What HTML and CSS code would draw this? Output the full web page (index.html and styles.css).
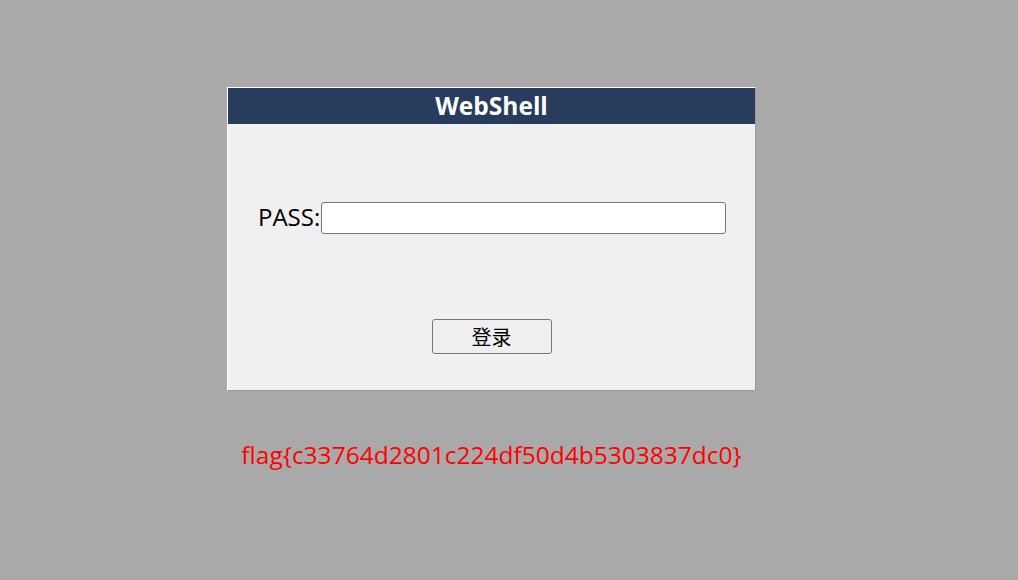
FILE: index.html
```html
<!DOCTYPE html>
<html>
<head>
<meta charset="utf-8">
<link rel="stylesheet" href="styles.css">
</head>
<body>
<div class="wrap">
  <div class="box">
    <div class="head">WebShell</div>
    <div class="row">
      <label class="lbl">PASS:</label><input class="pass" type="password">
    </div>
    <div class="btnrow"><button class="btn">登录</button></div>
  </div>
  <div class="flag">flag{c33764d2801c224df50d4b5303837dc0}</div>
</div>
</body>
</html>
```
FILE: styles.css
```css
html, body {
  margin: 0;
  padding: 0;
  background: #a9a9a9;
  font-family: "Open Sans", "Noto Sans", "Noto Sans CJK SC", sans-serif;
}
.wrap {
  width: 529px;
  margin: 87px 0 0 227px;
}
.box {
  box-sizing: border-box;
  width: 529px;
  height: 304px;
  background: #f0f0f0;
  border: 1px solid;
  border-color: #ffffff #9a9a9a #9a9a9a #ffffff;
  display: flex;
  flex-direction: column;
}
.head {
  height: 36px;
  background: #283c5e;
  color: #fff;
  font-weight: bold;
  font-size: 24.5px;
  line-height: 36px;
  text-align: center;
}
.row {
  display: flex;
  align-items: center;
  margin-top: 78px;
  padding-left: 30px;
  height: 32px;
}
.lbl {
  font-size: 24px;
  color: #000;
  line-height: 30px;
  margin-bottom: 3px;
}
.pass {
  box-sizing: border-box;
  width: 405px;
  height: 32px;
  margin: 0 0 0 1px;
  border: 1px solid #767676;
  border-radius: 3px;
  background: #fff;
  padding: 0 4px;
}
.btnrow {
  display: flex;
  justify-content: center;
  margin-top: 85px;
}
.btn {
  box-sizing: border-box;
  width: 120px;
  height: 35px;
  margin: 0;
  border: 1px solid #767676;
  border-radius: 3px;
  background: #efefef;
  font-family: "Noto Sans CJK SC", sans-serif;
  font-size: 20px;
  line-height: 1;
  color: #000;
  padding: 0;
}
.flag {
  margin-top: 49px;
  text-align: center;
  color: #ff0000;
  font-size: 24.5px;
  line-height: 30px;
}
```
